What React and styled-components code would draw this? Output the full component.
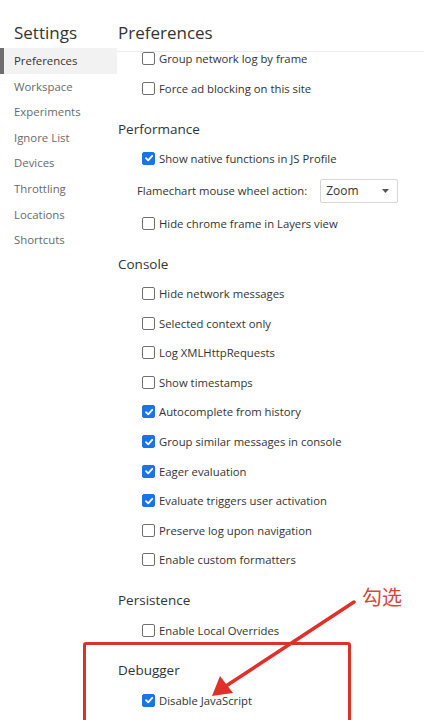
import React from "react";
import styled, { createGlobalStyle } from "styled-components";

const Global = createGlobalStyle`
  html, body { margin: 0; padding: 0; background: #fff; }
  body { font-family: "Open Sans", "Noto Sans", sans-serif; }
  * { box-sizing: border-box; }
`;

const Page = styled.div`
  position: relative;
  width: 424px;
  height: 720px;
  overflow: hidden;
  display: flex;
  background: #fff;
`;

const Sidebar = styled.div`
  width: 117px;
  flex-shrink: 0;
`;

const SideTitle = styled.div`
  height: 48px;
  padding: 21px 0 0 14px;
  font-size: 17px;
  line-height: 24px;
  color: #333;
`;

const SideItem = styled.div`
  height: 25.6px;
  line-height: 25.6px;
  padding-left: 14px;
  font-size: 11.4px;
  color: ${(p) => (p.active ? "#333" : "#6a6a6a")};
  background: ${(p) => (p.active ? "#f2f2f2" : "transparent")};
  border-left: 4px solid ${(p) => (p.active ? "#6e6e6e" : "transparent")};
  text-indent: -4px;
`;

const Main = styled.div`
  flex: 1;
  display: flex;
  flex-direction: column;
  min-width: 0;
`;

const MainHeader = styled.div`
  height: 52px;
  padding: 21px 0 0 1px;
  font-size: 17px;
  line-height: 24px;
  color: #333;
  border-bottom: 1px solid #ececec;
`;

const Scroll = styled.div`
  flex: 1;
  overflow: hidden;
`;

const Content = styled.div`
  margin-top: -8px;
`;

const SectionTitle = styled.div`
  padding: 12.5px 0 2px 1px;
  line-height: 26px;
  font-size: 13.5px;
  color: #333;
`;

const Row = styled.label`
  display: flex;
  align-items: center;
  height: 29.6px;
  padding-left: 25px;
  font-size: 11.3px;
  color: #333;
`;

const Box = styled.span`
  width: 13px;
  height: 13px;
  border-radius: 2px;
  margin-right: 4px;
  flex-shrink: 0;
  display: flex;
  align-items: center;
  justify-content: center;
  background: ${(p) => (p.checked ? "#1a73e8" : "#fff")};
  border: 1px solid ${(p) => (p.checked ? "#1a73e8" : "#6f6f6f")};
`;

const SelectRow = styled.div`
  display: flex;
  align-items: center;
  height: 35.4px;
  padding-left: 20px;
  font-size: 11.3px;
  color: #333;
`;

const SelectBox = styled.div`
  margin-left: 13px;
  width: 78px;
  height: 24px;
  border: 1px solid #d6d6d6;
  border-radius: 2px;
  display: flex;
  align-items: center;
  justify-content: space-between;
  padding: 0 8px 0 5px;
  font-size: 12px;
  color: #333;
`;

const Annotation = styled.div`
  position: absolute;
  left: 83px;
  top: 642px;
  width: 268px;
  height: 100px;
  border: 3px solid #d9322b;
  border-radius: 3px;
  pointer-events: none;
`;

const Note = styled.div`
  position: absolute;
  left: 362px;
  top: 584px;
  font-family: "Noto Sans CJK SC", sans-serif;
  font-size: 20px;
  line-height: 26px;
  color: #d9453b;
`;

const ArrowSvg = styled.svg`
  position: absolute;
  left: 0;
  top: 0;
  pointer-events: none;
`;

const Check = ({ checked }) => (
  <Box checked={checked}>
    {checked && (
      <svg width="10" height="10" viewBox="0 0 10 10">
        <path d="M2 5.2 L4.2 7.3 L8.2 2.8" fill="none" stroke="#fff" strokeWidth="1.8" strokeLinecap="round" strokeLinejoin="round" />
      </svg>
    )}
  </Box>
);

const Item = ({ checked, children }) => (
  <Row>
    <Check checked={checked} />
    {children}
  </Row>
);

const NAV = ["Preferences", "Workspace", "Experiments", "Ignore List", "Devices", "Throttling", "Locations", "Shortcuts"];

const CONSOLE = [
  ["Hide network messages", false],
  ["Selected context only", false],
  ["Log XMLHttpRequests", false],
  ["Show timestamps", false],
  ["Autocomplete from history", true],
  ["Group similar messages in console", true],
  ["Eager evaluation", true],
  ["Evaluate triggers user activation", true],
  ["Preserve log upon navigation", false],
  ["Enable custom formatters", false],
];

export default function App() {
  return (
    <>
      <Global />
      <Page>
        <Sidebar>
          <SideTitle>Settings</SideTitle>
          {NAV.map((n, i) => (
            <SideItem key={n} active={i === 0}>{n}</SideItem>
          ))}
        </Sidebar>
        <Main>
          <MainHeader>Preferences</MainHeader>
          <Scroll>
            <Content>
              <Item>Group network log by frame</Item>
              <Item>Force ad blocking on this site</Item>

              <SectionTitle>Performance</SectionTitle>
              <Item checked>Show native functions in JS Profile</Item>
              <SelectRow>
                Flamechart mouse wheel action:
                <SelectBox>
                  Zoom
                  <svg width="7" height="4" viewBox="0 0 7 4">
                    <path d="M0 0 L7 0 L3.5 4 Z" fill="#555" />
                  </svg>
                </SelectBox>
              </SelectRow>
              <Item>Hide chrome frame in Layers view</Item>

              <SectionTitle>Console</SectionTitle>
              {CONSOLE.map(([t, c]) => (
                <Item key={t} checked={c}>{t}</Item>
              ))}

              <SectionTitle>Persistence</SectionTitle>
              <Item>Enable Local Overrides</Item>

              <SectionTitle>Debugger</SectionTitle>
              <Item checked>Disable JavaScript</Item>
            </Content>
          </Scroll>
        </Main>

        <Annotation />
        <Note>勾选</Note>
        <ArrowSvg width="424" height="720" viewBox="0 0 424 720">
          <line x1="354" y1="602" x2="226" y2="686" stroke="#e0302a" strokeWidth="3.5" strokeLinecap="round" />
          <polygon points="212,696 220,676 233,693" fill="#e0302a" />
        </ArrowSvg>
      </Page>
    </>
  );
}
